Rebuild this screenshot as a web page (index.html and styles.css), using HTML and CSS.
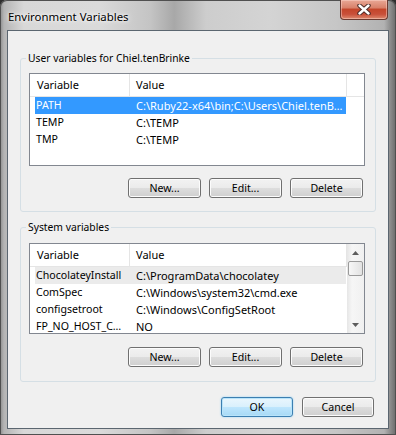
FILE: index.html
```html
<!DOCTYPE html>
<html lang="en">
<head>
    <meta charset="UTF-8">
    <title>Environment Variables</title>
    <link rel="stylesheet" href="styles.css">
</head>
<body>
    <div class="window">
        <div class="titlebar">
            <span class="title">Environment Variables</span>
            <div class="close">
                <svg width="14" height="11" viewBox="0 0 14 11">
                    <path d="M2.5 1.5 L11.5 9.5 M11.5 1.5 L2.5 9.5" stroke="#4a2a26" stroke-width="4.4" stroke-linecap="round"/>
                    <path d="M2.5 1.5 L11.5 9.5 M11.5 1.5 L2.5 9.5" stroke="#ffffff" stroke-width="2.4" stroke-linecap="round"/>
                </svg>
            </div>
        </div>

        <div class="client">
            <fieldset class="group">
                <legend>User variables for Chiel.tenBrinke</legend>
                <div class="list user-list">
                    <div class="list-main">
                        <div class="header">
                            <span class="col-var">Variable</span>
                            <span class="col-val">Value</span>
                            <span class="col-rest"></span>
                        </div>
                        <div class="row selected"><span class="var">PATH</span><span class="val">C:\Ruby22-x64\bin;C:\Users\Chiel.tenB…</span></div>
                        <div class="row"><span class="var">TEMP</span><span class="val">C:\TEMP</span></div>
                        <div class="row"><span class="var">TMP</span><span class="val">C:\TEMP</span></div>
                    </div>
                </div>
                <div class="actions">
                    <button class="btn">New...</button>
                    <button class="btn">Edit...</button>
                    <button class="btn">Delete</button>
                </div>
            </fieldset>

            <fieldset class="group system">
                <legend>System variables</legend>
                <div class="list system-list">
                    <div class="list-main">
                        <div class="header">
                            <span class="col-var">Variable</span>
                            <span class="col-val">Value</span>
                        </div>
                        <div class="row inactive"><span class="var">ChocolateyInstall</span><span class="val">C:\ProgramData\chocolatey</span></div>
                        <div class="row"><span class="var">ComSpec</span><span class="val">C:\Windows\system32\cmd.exe</span></div>
                        <div class="row"><span class="var">configsetroot</span><span class="val">C:\Windows\ConfigSetRoot</span></div>
                        <div class="row"><span class="var">FP_NO_HOST_C…</span><span class="val">NO</span></div>
                    </div>
                    <div class="scrollbar">
                        <div class="sb-arrow">
                            <svg width="7" height="4" viewBox="0 0 7 4"><path d="M0 4 L3.5 0 L7 4 Z" fill="#5d5d5d"/></svg>
                        </div>
                        <div class="sb-thumb"></div>
                        <div class="sb-track"></div>
                        <div class="sb-arrow">
                            <svg width="7" height="4" viewBox="0 0 7 4"><path d="M0 0 L7 0 L3.5 4 Z" fill="#5d5d5d"/></svg>
                        </div>
                    </div>
                </div>
                <div class="actions">
                    <button class="btn">New...</button>
                    <button class="btn">Edit...</button>
                    <button class="btn">Delete</button>
                </div>
            </fieldset>

            <div class="footer">
                <button class="btn btn-default">OK</button>
                <button class="btn">Cancel</button>
            </div>
        </div>
    </div>
</body>
</html>
```

FILE: styles.css
```css
* {
    box-sizing: border-box;
}
body {
    margin: 0;
    background: #2e2e2e;
    font-family: "Noto Sans", "Open Sans", sans-serif;
    font-size: 11px;
    color: #000;
}
.window {
    width: 396px;
    height: 435px;
    display: flex;
    flex-direction: column;
    border-radius: 7px 7px 0 0;
    background: linear-gradient(to right, #8c8c8c 0, #b4b4b4 1%, #d8d8d8 6%, #dadada 25%, #c4c4c4 38%, #a8a8a8 44%, #cdcdcd 52%, #d4d4d4 68%, #c6c6c6 85%, #b2b2b2 97%, #6a6a6a 100%);
    box-shadow: inset 0 0 0 1px #505050;
}
.titlebar {
    height: 30px;
    display: flex;
    justify-content: space-between;
    align-items: flex-start;
}
.title {
    margin: 9px 0 0 8px;
    font-size: 11.4px;
    line-height: 16px;
    text-shadow: 0 0 6px #fff, 0 0 3px #fff;
}
.close {
    width: 48px;
    height: 20px;
    margin-right: 8px;
    display: flex;
    align-items: center;
    justify-content: center;
    border: 1px solid #6b3a31;
    border-top: none;
    border-radius: 0 0 4px 4px;
    background: linear-gradient(#e9a896 0%, #d9826b 40%, #c4462b 50%, #c9503a 75%, #dd8a6f 100%);
    box-shadow: inset 0 0 0 1px rgba(255, 220, 210, 0.45);
}
.client {
    flex: 1;
    margin: 0 7px 6px;
    padding: 19px 12px 0;
    background: #f0f0f0;
    border: 1px solid #5b6670;
}
.group {
    margin: 0;
    padding: 7px 10px 13px 8px;
    border: 1px solid #d5dfe5;
    border-radius: 3px;
}
.group legend {
    margin-left: -3px;
    padding: 0 2px;
    font-size: 10.3px;
    line-height: 16px;
}
.group.system {
    margin-top: 7px;
    padding-top: 8px;
    padding-bottom: 14px;
}
.list {
    width: 336px;
    height: 93px;
    display: flex;
    background: #fff;
    border: 1px solid #828790;
}
.system-list {
    height: 91px;
}
.list-main {
    flex: 1;
    overflow: hidden;
}
.header {
    display: flex;
    height: 23px;
    border-bottom: 1px solid #e5e5e5;
}
.header span {
    line-height: 22px;
    white-space: nowrap;
}
.col-var {
    width: 100px;
    padding-left: 7px;
    border-right: 1px solid #e5e5e5;
}
.col-val {
    width: 217px;
    padding-left: 6px;
    border-right: 1px solid #e5e5e5;
}
.col-rest {
    flex: 1;
}
.row {
    display: flex;
    width: 311px;
    height: 17px;
    margin-left: 5px;
    line-height: 17px;
    white-space: nowrap;
}
.row .var {
    width: 100px;
    padding-left: 1px;
    overflow: hidden;
    font-size: 10.6px;
}
.row .val {
    flex: 1;
    padding-left: 1px;
    overflow: hidden;
}
.row.selected {
    background: #3399ff;
    color: #fff;
}
.row.inactive {
    background: #ebebeb;
}
.scrollbar {
    width: 17px;
    display: flex;
    flex-direction: column;
    background: linear-gradient(to right, #e6e6e6, #f6f6f6 30%, #f0f0f0);
}
.sb-arrow {
    height: 17px;
    display: flex;
    align-items: center;
    justify-content: center;
}
.sb-thumb {
    height: 15px;
    margin: 0 1px;
    border: 1px solid #9a9a9a;
    border-radius: 2px;
    background: linear-gradient(to right, #f7f7f7, #e2e2e2);
}
.sb-track {
    flex: 1;
}
.actions {
    display: flex;
    justify-content: flex-end;
    gap: 8px;
    margin-top: 12px;
    padding-right: 2px;
}
.system .actions {
    margin-top: 13px;
}
.btn {
    width: 73px;
    height: 20px;
    padding: 0;
    font: inherit;
    font-size: 10.6px;
    color: #000;
    border: 1px solid #707070;
    border-radius: 3px;
    background: linear-gradient(#f2f2f2 0%, #ebebeb 49%, #dddddd 50%, #cfcfcf 100%);
    box-shadow: inset 0 0 0 1px #fcfcfc;
}
.footer {
    display: flex;
    justify-content: flex-end;
    gap: 9px;
    margin-top: 15px;
    padding-right: 2px;
}
.footer .btn {
    width: 72px;
}
.btn-default {
    border-color: #3c7fb1;
    background: linear-gradient(#eaf6fd 0%, #d9f0fc 49%, #bee6fd 50%, #a7d9f5 100%);
    box-shadow: inset 0 0 0 1px #b9e4fa, 0 0 2px #8fd0f5;
}
```
